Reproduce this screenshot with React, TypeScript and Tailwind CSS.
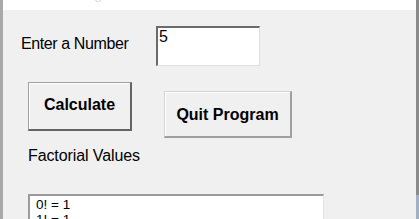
export default function App() {
  return (
    <div className="w-[419px] h-[219px] overflow-hidden flex bg-[#f0f0f0] text-black font-['Liberation_Sans',Arial,sans-serif]">
      {/* window frame left */}
      <div className="w-[3px] shrink-0 bg-[#a9a9a9]" />

      <div className="flex-1 flex flex-col min-w-0">
        {/* title bar, mostly cut off */}
        <div className="h-[10px] shrink-0 bg-white overflow-hidden pl-[6px]">
          <div className="-mt-[15px] text-[15px] leading-[18px] text-[#dcdcdc] whitespace-nowrap">
            Factorial Program Calculator
          </div>
        </div>

        <div className="flex flex-col pl-[18px]">
          {/* number entry */}
          <div className="mt-[16px] flex items-start">
            <div className="w-[135px] mt-[9px] text-[16px] leading-[18px] tracking-[-0.4px]">
              Enter a Number
            </div>
            <div className="w-[104px] h-[40px] bg-white border-t-2 border-l-2 border-b border-r border-t-[#6b6b6b] border-l-[#6b6b6b] border-b-[#dedede] border-r-[#dedede] pl-[1px] text-[16px] leading-[18px]">
              5
            </div>
          </div>

          {/* buttons */}
          <div className="mt-[16px] ml-[7px] flex items-start">
            <button className="w-[104px] h-[49px] bg-[#f0f0f0] border-t border-l border-b-2 border-r-2 border-t-[#a0a0a0] border-l-[#a0a0a0] border-b-[#646464] border-r-[#646464] shadow-[inset_1px_1px_0_#ffffff] text-[16px] font-bold leading-[18px] pb-[2px]">
              Calculate
            </button>
            <button className="ml-[32px] mt-[9px] w-[128px] h-[47px] bg-[#f0f0f0] border-t border-l border-b-2 border-r-2 border-t-[#d4d4d4] border-l-[#d4d4d4] border-b-[#a0a0a0] border-r-[#a0a0a0] shadow-[inset_1px_1px_0_#ffffff] text-[16px] font-bold leading-[18px] pt-[2px]">
              Quit Program
            </button>
          </div>

          <div className="mt-[9px] ml-[7px] text-[16px] leading-[18px] tracking-[-0.1px]">
            Factorial Values
          </div>

          {/* results list */}
          <div className="mt-[29px] ml-[7px] w-[296px] h-[60px] bg-white border-t-2 border-l-2 border-r border-t-[#9a9a9a] border-l-[#9a9a9a] border-r-[#e3e3e3] pl-[6px] pt-[1px] text-[13.5px] leading-[15px]">
            <div>0! = 1</div>
            <div>1! = 1</div>
            <div>2! = 2</div>
          </div>
        </div>
      </div>

      {/* window frame right */}
      <div className="w-[3px] shrink-0 flex flex-col">
        <div className="h-[195px] bg-[#8a8a8a]" />
        <div className="flex-1 bg-[#a3afc2]" />
      </div>
    </div>
  )
}
